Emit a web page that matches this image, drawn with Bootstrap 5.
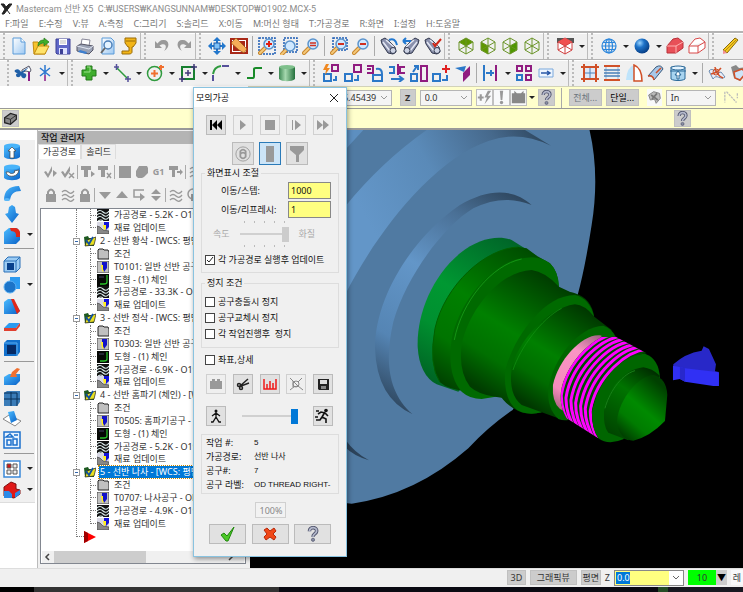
<!DOCTYPE html>
<html lang="ko">
<head>
<meta charset="utf-8">
<meta name="viewport" content="width=device-width, initial-scale=1">
<title>Mastercam 선반 X5</title>
<link href="https://cdn.jsdelivr.net/npm/bootstrap@5.3.0/dist/css/bootstrap.min.css" rel="stylesheet">
<style>
:root{--face:#f0f0f0;--pale:#ffffcc;--line:#b4b4b4}
body{font:9px/12px "Noto Sans","Noto Sans CJK KR",sans-serif;color:#333;background:#fff;overflow:hidden}
button,input,select{font:inherit;color:inherit;padding:0;border-radius:0}
svg{display:block;flex:none}
.caption-bar{height:17px;color:#8c8c8c;font-family:Roboto,"Noto Sans CJK KR",sans-serif}
.menu-bar{height:14px;gap:10px;padding-left:5px}
.menu-bar a{color:#777;text-decoration:none}
.tools{height:27px;background:var(--face);border-top:1px solid var(--line);box-shadow:inset 0 1px #fff;overflow:hidden}
.tools.first{height:28px;border-top-width:2px}
.ic{width:22px;height:22px;border:0;background:none;display:flex;align-items:center;justify-content:center;flex:none}
.ic svg{width:18px;height:18px}
.dd{width:11px;height:17px;border:0;background:none;flex:none;display:flex;align-items:center;justify-content:center}
.dd::before{content:"";border:3px solid transparent;border-top:3px solid #222;border-bottom:0}
.grip{width:11px;height:100%;flex:none;border-left:1px solid #bbb;background:radial-gradient(circle,#bbb 1px,transparent 1px) 2px 3px/4px 4px repeat-y}
.grip.edge{width:8px;border-left:0}
.rule{width:6px;height:20px;flex:none;background:linear-gradient(#aaa,#aaa) 2px 0/1px 100% no-repeat}
.ribbon{height:22px}
.ribbon .pale{background:var(--pale);border-top:1px solid #d2d2b8;padding-left:52px}
.prompt-bar{height:22px;background:var(--pale);border-top:1px solid #999;border-bottom:2px solid #999;padding:0 52px 0 2px}
.pick{height:16px;border:1px solid #b5b5b5;appearance:none;background:#f4f4f4 url("data:image/svg+xml,%3Csvg xmlns='http://www.w3.org/2000/svg' width='8' height='6'%3E%3Cpath d='M1 1l3 3 3-3' fill='none' stroke='%23999'/%3E%3C/svg%3E") right 3px center no-repeat;padding:0 4px;line-height:13px;flex:none}
.pick.coord{padding-left:32px;width:92px}
.pick.depth{width:70px;padding-left:2px;border-color:#888;color:#fff;background:url("data:image/svg+xml,%3Csvg xmlns='http://www.w3.org/2000/svg' width='8' height='6'%3E%3Cpath d='M1 1l3 3 3-3' fill='none' stroke='%23666'/%3E%3C/svg%3E") right 3px center no-repeat,linear-gradient(#0078d7,#0078d7) 1px 1px/14px 12px no-repeat,linear-gradient(#ffff80,#ffff80) 0 0/54px 100% no-repeat #fff}
.flat{height:17px;background:#ccc;border:1px solid #c0c0c0;line-height:14px;flex:none;display:flex;align-items:center;justify-content:center}
.flat svg{width:15px;height:15px}
.side{width:38px;border-right:1px solid #bbb;padding-top:10px}
.side-in{background:var(--face);width:35px;padding-bottom:2px;border-bottom:1px solid #ddd}
.side .ic{height:21px;width:24px}
.side .dd{height:21px}
.side hr{margin:3px 1px 4px 4px;border-top:1px solid #999;opacity:1}
.manager{width:212px;background:var(--face);padding:1px 4px 4px 0}
.manager h2{font-size:9px;line-height:13px;margin:0 -4px 0 0;background:#b4b4b4;color:#111;padding-left:3px}
.tabs{margin-bottom:1px}
.tabs button{border:1px solid #ddd;border-bottom:0;height:15px;line-height:12px;padding:0 4px;background:var(--face)}
.tabs button.on{background:#fff}
.ops{height:23px;padding-left:4px;color:#999}
.ops.last{margin-bottom:2px}
.ops .ic{width:17px}
.ops .ic svg{width:14px;height:14px}
.ops .rule{width:3px;height:14px;background-position:1px 0}
.tree-box{background:#fff;border:1px solid #828790;margin-left:2px}
.tree{list-style:none;margin:0;padding:0;flex:1 0 auto;position:relative}
.tree li{flex:1;display:flex;align-items:center;white-space:nowrap;padding-left:56px;position:relative;line-height:12px;gap:4px}
.tree li svg{width:12px;height:12px}
.tree li::before{content:"";position:absolute;left:49px;width:7px;top:0;bottom:0;border-left:1px dotted #777;background:repeating-linear-gradient(90deg,#777 0 1px,transparent 1px 2px) 0 50%/100% 1px no-repeat}
.tree li.end::before{bottom:50%;background-position:0 100%}
.tree li.op{padding-left:43px;gap:3px}
.tree li.op::before{content:none}
.tree li.op button{position:absolute;left:32px;width:7px;height:7px;border:1px solid #999;background:linear-gradient(#36a,#36a) center/3px 1px no-repeat #fff;z-index:1}
.tree li span{padding:0 1px}
.tree li.sel span{background:#0078d7;color:#fff;flex:1;outline:1px dotted #c80}
.trunk{position:absolute;left:35px;top:0;bottom:6px;border-left:1px dotted #777;width:8px;border-bottom:1px dotted #777}
.hbar{height:12px;background:var(--face);margin:0 1px}
.hbar .thumb{width:92px;background:#cdcdcd;height:100%}
.scene{background:#000;min-width:0}
.status{height:19px;background:var(--face);gap:4px;padding-bottom:1px;border-top:1px solid #ddd}
.status .flat{height:15px;line-height:13px}
.strip{height:5px;background:linear-gradient(90deg,#000 34px,#333 34px 279px,#0a0a12 279px 658px,#264d26 658px 668px,#181820 668px)}
.sim{position:absolute;left:193px;top:87px;width:154px;background:var(--face);border:1px solid #89c3e0;box-shadow:1px 2px 5px #0006;color:#111;z-index:5}
.sim-head{height:19px;background:#fff;padding:0 8px 0 2px}
.sim-body{padding:8px 7px 12px}
.key{width:20px;height:20px;background:#e1e1e1;border:1px solid #bbb;display:flex;align-items:center;justify-content:center;color:#999}
.key svg{width:16px;height:16px}
.key.off{background:#efefef;border-color:#d0d0d0}
.key.big{width:22px;height:23px}
.key.on{background:#cce4f7;border-color:#2a7ab8}
.key.wide{width:37px}
.five{padding:0 6px 0 5px}
.trio{gap:5px;margin:7px 0 2px}
.sim fieldset{border:1px solid #ddd;padding:0 7px 0 3px}
.sim legend{float:none;width:auto;font-size:9px;line-height:12px;margin:0 0 3px;padding:0 2px}
.fld{height:17px;width:43px;background:#ffff80;border:1px solid #888;padding-left:2px}
.pair{margin:0 0 2px 16px}
.pace{color:#aaa;padding:0 16px 0 8px;margin:3px 0 7px}
.tick{display:flex;align-items:center;gap:3px;white-space:nowrap;line-height:12px}
.update{padding-bottom:6px}
.stops{display:grid;gap:4px;padding:4px 0 7px}
.tick input{appearance:none;width:10px;height:10px;border:1px solid #444;background:#fff;flex:none;margin:0}
.tick input:checked{background:#fff url("data:image/svg+xml,%3Csvg xmlns='http://www.w3.org/2000/svg' width='8' height='8'%3E%3Cpath d='M1 4l2 2 4-5' fill='none' stroke='%23222'/%3E%3C/svg%3E")}
.detail{margin:6px 0 8px;padding-left:4px}
.rng{appearance:none;height:16px;background:linear-gradient(#d0d0d0,#d0d0d0) 0 50%/100% 2px no-repeat;margin:0;min-width:0}
.rng::-webkit-slider-thumb{appearance:none;width:7px;height:15px;background:#0078d7}
.rng:disabled::-webkit-slider-thumb{background:#ccc}
.scale{width:49px;padding:5px 0;background:repeating-linear-gradient(90deg,#bbb 0 1px,transparent 1px 10px) 4px 0/41px 2px no-repeat,repeating-linear-gradient(90deg,#bbb 0 1px,transparent 1px 10px) 4px 100%/41px 2px no-repeat}
.facts{border:1px solid #ddd;padding:1px 0 1px 4px;margin:8px 0;line-height:14px;display:grid;grid-template-columns:48px 1fr;white-space:nowrap;overflow:hidden}
.facts dt,.facts dd{font-weight:400;margin:0}
.facts dd{font-family:"Liberation Sans","Noto Sans CJK KR",sans-serif;font-size:8px}
.pct{width:31px;height:16px;border:1px solid #d0d0d0;background:#f2f2f2;text-align:right;color:#888;padding-right:2px}
.finish{margin-top:6px;padding:0 8px}
</style>
<script src="https://cdn.jsdelivr.net/npm/bootstrap@5.3.0/dist/js/bootstrap.bundle.min.js"></script>
</head>
<body class="vh-100 d-flex flex-column position-relative">

<svg width="0" height="0" class="position-absolute" aria-hidden="true">
<defs>
<linearGradient id="gb" x1="0" y1="0" x2="1" y2="1"><stop stop-color="#4cbcff"/><stop offset="1" stop-color="#0a62c8"/></linearGradient>
<linearGradient id="gw" x1="0" y1="0" x2="1" y2="1"><stop stop-color="#fff"/><stop offset="1" stop-color="#9cc8f2"/></linearGradient>
<linearGradient id="gg" x1="0" x2="1"><stop stop-color="#3f8a55"/><stop offset=".4" stop-color="#a5d8ae"/><stop offset="1" stop-color="#24703c"/></linearGradient>
<radialGradient id="gs" cx=".35" cy=".3" r=".75"><stop stop-color="#9ad4ff"/><stop offset=".4" stop-color="#1d72c8"/><stop offset="1" stop-color="#053a80"/></radialGradient>
<g id="lens"><path d="M2 16l5-5" stroke="#c8862c" stroke-width="4" stroke-linecap="round"/><path d="M2 16l5-5" stroke="#f4c878" stroke-width="2" stroke-linecap="round"/><circle cx="11" cy="7" r="5" fill="#cfe8ff" stroke="#5a93cc" stroke-width="1.500"/></g>
<g id="wire" fill="none" stroke="#6a9428"><path d="M9 1l7 4v8l-7 4-7-4V5zM2 5l7 4 7-4M9 9v8M9 1v8M2 13l7-4 7 4"/></g>
<g id="binoc"><path d="M1 3l4-2 5 4 5 5 1 5-3 2-5-1-6-9z" fill="#8a90ac" stroke="#30364c"/><path d="M3 5l7 9M6 3l8 7" stroke="#e4e8f4" stroke-width="1.500"/><circle cx="13" cy="13.500" r="3" fill="#cdd3e4" stroke="#333a50"/></g>
<g id="qm"><path d="M5 6c0-6 9-5 8 0-.5 3-4 3-4 6" fill="none" stroke="#50546c" stroke-width="4"/><path d="M5 6c0-6 9-5 8 0-.5 3-4 3-4 6" fill="none" stroke="#b4b9cc" stroke-width="2"/><circle cx="9" cy="15.500" r="1.800" fill="#888da4" stroke="#50546c" stroke-width=".8"/></g>
</defs>
<symbol id="new" viewBox="0 0 18 18"><path d="M3 1h8l4 4v12H3z" fill="url(#gw)" stroke="#5b9bd8"/><path d="M11 1v4h4" fill="#fff" stroke="#5b9bd8"/></symbol>
<symbol id="open" viewBox="0 0 18 18"><path d="M1 5h5l2 2h7l-2 10H2z" fill="#f7c32c" stroke="#c08a10"/><path d="M2 17l4-8h11l-4 8z" fill="#ffe36a" stroke="#c08a10"/><path d="M6 9c0-5 3-6 6-6V1l5 4-5 4V6c-3 0-4 1-6 3z" fill="#3fae2a" stroke="#24791a" stroke-width=".7"/></symbol>
<symbol id="save" viewBox="0 0 18 18"><path d="M2 2h14v15H3l-1-1z" fill="#6068c8" stroke="#3c4096"/><path d="M5 2h8v6H5z" fill="#fff"/><path d="M5 11h8v6H5z" fill="#dfe3ff"/><path d="M6 12h3v5H6z" fill="#3c4096"/><path d="M6 4h6M6 6h6" stroke="#bbb"/></symbol>
<symbol id="print" viewBox="0 0 18 18"><path d="M5 8l1-6 8 1-1 6z" fill="#fff" stroke="#889"/><path d="M1 9l4-2 12 2v4l-4 4-12-3z" fill="#9aa2b4" stroke="#556"/><path d="M1 9l12 3 4-3" fill="none" stroke="#e4e8f4"/><path d="M4 13l7 2-1 2-8-2z" fill="#3c7fd0"/></symbol>
<symbol id="preview" viewBox="0 0 18 18"><path d="M4 1h9l3 3v13H4z" fill="url(#gw)" stroke="#5b9bd8"/><circle cx="10" cy="8" r="4" fill="#e4f3ff" stroke="#4c7fb8" stroke-width="1.500"/><path d="M7 11l-4 5" stroke="#666" stroke-width="2"/></symbol>
<symbol id="funnel" viewBox="0 0 18 18"><path d="M5 1h11v5l-3 4h-1v5c0 1-1 2-3 2H2v-3h7v-4H8L5 6z" fill="#f2b518" stroke="#9a6c08"/><path d="M6 4h9" stroke="#9a6c08"/></symbol>
<symbol id="undo" viewBox="0 0 18 18"><path d="M2 4v7h7L6.500 8.500C12 5 15 9 11 14c7-4 5-12-1-11-3 0-4 2-5.500 3.500z" fill="#999"/></symbol>
<symbol id="redo" viewBox="0 0 18 18"><path d="M16 4v7H9l2.500-2.500C6 5 3 9 7 14 0 10 2 2 8 3c3 0 4 2 5.500 3.500z" fill="#999"/></symbol>
<symbol id="pan" viewBox="0 0 18 18"><path d="M9 0l4 4h-3v2H8V4H5zM9 18l4-4h-3v-2H8v2H5zM0 9l4-4v3h2v2H4v3zM18 9l-4-4v3h-2v2h2v3z" fill="#2277cc"/><rect x="6" y="6" width="6" height="6" fill="#7cc0f8" stroke="#1c5ca8"/></symbol>
<symbol id="hand" viewBox="0 0 18 18"><path d="M0 1h18v16H0z" fill="#a82818"/><path d="M2 3h14v12H2z" fill="#fff"/><path d="M3 4h12v10H3z" fill="#a82818"/><path d="M1 6l5-5 5 5 6 6-3 4-5-3z" fill="#f4ad58" stroke="#9a4c10" stroke-width=".7"/></symbol>
<symbol id="zin" viewBox="0 0 18 18"><path d="M1 1h16v16H1z" fill="none" stroke="#1d5cb4" stroke-width="1.500" stroke-dasharray="2 1"/><use href="#lens"/><path d="M8 7h6M11 4v6" stroke="#e02010" stroke-width="2"/></symbol>
<symbol id="zwin" viewBox="0 0 18 18"><path d="M4 1h13v14H4z" fill="none" stroke="#1d5cb4" stroke-width="1.500" stroke-dasharray="2 1"/><use href="#lens" y="2" x="-1"/></symbol>
<symbol id="zeq" viewBox="0 0 18 18"><use href="#lens"/><path d="M8 6h6M8 8.500h6" stroke="#d03020" stroke-width="1.500"/></symbol>
<symbol id="zout" viewBox="0 0 18 18"><path d="M3 1h14v12H3z" fill="none" stroke="#1d5cb4" stroke-width="1.500" stroke-dasharray="2 1"/><use href="#lens"/><path d="M8 7h6" stroke="#d03020" stroke-width="2"/></symbol>
<symbol id="zo2" viewBox="0 0 18 18"><use href="#lens"/><path d="M8 7h6" stroke="#d03020" stroke-width="2"/></symbol>
<symbol id="bn1" viewBox="0 0 18 18"><use href="#binoc"/><path d="M9 3c4-2 7 0 8 5" fill="none" stroke="#2278d0" stroke-width="2"/></symbol>
<symbol id="bn2" viewBox="0 0 18 18"><use href="#binoc" transform="matrix(-1 0 0 1 18 0)"/><path d="M1 4h8M1 4l3-3M1 4l3 3" fill="none" stroke="#2278d0" stroke-width="2"/></symbol>
<symbol id="bn3" viewBox="0 0 18 18"><use href="#binoc"/><path d="M9 6l2 3 6-7" fill="none" stroke="#d02818" stroke-width="2"/></symbol>
<symbol id="ctop" viewBox="0 0 18 18"><path d="M9 1l7 4-7 4-7-4z" fill="#5f9800"/><use href="#wire"/></symbol>
<symbol id="cleft" viewBox="0 0 18 18"><path d="M2 5l7 4v8l-7-4z" fill="#5f9800"/><use href="#wire"/></symbol>
<symbol id="cright" viewBox="0 0 18 18"><path d="M16 5L9 9v8l7-4z" fill="#4f9800"/><use href="#wire"/></symbol>
<symbol id="cwire" viewBox="0 0 18 18"><use href="#wire"/></symbol>
<symbol id="cred" viewBox="0 0 18 18"><path d="M1 1h17v5H1z" fill="#555"/><path d="M9 1l7 4v8l-7 4-7-4V5z" fill="#fff" stroke="#d04040"/><path d="M9 1l7 4-7 4-7-4z" fill="#f05050"/><path d="M2 5l7 4 7-4M9 9v8M2 13l7-4 7 4" fill="none" stroke="#d04040"/></symbol>
<symbol id="globe" viewBox="0 0 18 18"><g fill="none" stroke="#2b86dc" stroke-width="1.200"><circle cx="9" cy="9" r="7"/><ellipse cx="9" cy="9" rx="3.500" ry="7"/><path d="M2 9h14M9 2v14M3 5.500h12M3 12.500h12"/></g></symbol>
<symbol id="ball" viewBox="0 0 18 18"><circle cx="9" cy="9" r="7.500" fill="url(#gs)"/></symbol>
<symbol id="red" viewBox="0 0 18 18"><path d="M1 9l6-7 5-1 5 4v6l-7 5H1z" fill="#e85058" stroke="#b83038"/><path d="M1 9h9l7-4M10 9v7" fill="none" stroke="#ffb0b0"/></symbol>
<symbol id="redw" viewBox="0 0 18 18"><path d="M1 9l6-7 5-1 5 4v6l-7 5H1zM1 9h9l7-4M10 9v7" fill="#fff" stroke="#d84848"/></symbol>
<symbol id="pencil" viewBox="0 0 18 18"><path d="M2 13L14 1l3 2L6 16z" fill="#f4c820" stroke="#8a6a08"/><path d="M2 13l4 3-4 1z" fill="#f49098"/><path d="M4 14L15 3" stroke="#b88c10"/></symbol>
<symbol id="bfly" viewBox="0 0 18 18"><path d="M8 6l7-4 2 4-1 2-4-1-4 1z" fill="#fff" stroke="#556"/><path d="M1 6c3-2 5 0 6 2l8-5-6 6c4 0 4 3 2 5-2 1-4-1-4-3-1 3-5 3-5 0 0-1 1-2 2-2-3 0-4-2-3-3z" fill="#2060a8"/><path d="M15 8v9" stroke="#8a1c8a" stroke-width="2"/></symbol>
<symbol id="star" viewBox="0 0 18 18"><path d="M9 1v10M4 4l10 8M14 4L4 12" stroke="#2b78d0" stroke-width="1.500"/><path d="M9 11v6" stroke="#8a1c8a" stroke-width="1.500"/></symbol>
<symbol id="plus" viewBox="0 0 18 18"><path d="M6 2h6v4h4v6h-4v4H6v-4H2V6h4z" fill="#3fae2e" stroke="#24791a"/><path d="M7 3h3v5H4" fill="none" stroke="#9be08a"/></symbol>
<symbol id="line" viewBox="0 0 18 18"><path d="M3 3l12 12" stroke="#2f9a3e" stroke-width="1.500"/><path d="M1 3h5M3.500 0v6M12 15h6M15 12v6" stroke="#55509a" stroke-width="1.500"/></symbol>
<symbol id="circ" viewBox="0 0 18 18"><circle cx="8.500" cy="9.500" r="7" fill="none" stroke="#2f9a3e" stroke-width="1.500"/><path d="M5 9.500h7M8.500 6v7M13 3h5M15 1v5" stroke="#f07030" stroke-width="2"/></symbol>
<symbol id="rect" viewBox="0 0 18 18"><path d="M3 3h12v12H3z" fill="none" stroke="#188030" stroke-width="2"/><path d="M6 9h6M9 6v6M12 3h6M15 0v6M0 15h6M3 12v6" stroke="#403878" stroke-width="1.500"/></symbol>
<symbol id="arc" viewBox="0 0 18 18"><path d="M1 10Q2 3 9 2" fill="none" stroke="#2f9a3e" stroke-width="2"/><path d="M10 2h7M1 11v6" stroke="#55509a" stroke-width="2"/></symbol>
<symbol id="step" viewBox="0 0 18 18"><path d="M2 14h6q1 0 1-2V5q0-1 2-1h6" fill="none" stroke="#188a28" stroke-width="2"/></symbol>
<symbol id="cyl" viewBox="0 0 18 18"><path d="M1 3v12c3 3 13 3 16 0V3z" fill="url(#gg)"/><ellipse cx="9" cy="3" rx="8" ry="2" fill="#7fc08c"/></symbol>
<symbol id="x1" viewBox="0 0 18 18"><path d="M10 1h6v6h-6z" fill="none" stroke="#901c80" stroke-width="2"/><path d="M2 10h7v7H2zM11 16h3v-4" fill="none" stroke="#2b78c8" stroke-width="2"/><path d="M4 0L1 6h3l-1 5 5-7H5l2-4z" fill="#f08820"/></symbol>
<symbol id="x2" viewBox="0 0 18 18"><path d="M10 1h7v7h-7z" fill="none" stroke="#901c80" stroke-width="2"/><path d="M1 10h7v7H1zM10 16h4v-5" fill="none" stroke="#2b78c8" stroke-width="2"/></symbol>
<symbol id="x3" viewBox="0 0 18 18"><path d="M1 2h6v7H1M1 5h4" fill="none" stroke="#901c80" stroke-width="2"/><path d="M7 11h9v6H7zM10 5c4-1 6 1 6 5" fill="none" stroke="#2b78c8" stroke-width="2"/></symbol>
<symbol id="x4" viewBox="0 0 18 18"><path d="M10 0v11M17 3h-5v6h5" fill="none" stroke="#901c80" stroke-width="2"/><path d="M1 3h5v6H1M3 15h11M11 12l4 3-4 3" fill="none" stroke="#2b78c8" stroke-width="2"/></symbol>
<symbol id="x5" viewBox="0 0 18 18"><path d="M11 2h6v15h-6z" fill="none" stroke="#901c80" stroke-width="2"/><path d="M1 10h6v7H1zM3 8l4-6M4 2h4v4" fill="none" stroke="#2b78c8" stroke-width="2"/></symbol>
<symbol id="x6" viewBox="0 0 18 18"><path d="M1 10h7v7H1zM10 16h5v-5" fill="none" stroke="#2b78c8" stroke-width="2"/><path d="M14 1v8M10 5h8" stroke="#e02020" stroke-width="2"/></symbol>
<symbol id="x7" viewBox="0 0 18 18"><path d="M1 4l11-2-2 6z" fill="#2b78c8"/><path d="M9 9l7-7v9l-7 7z" fill="#901c80"/></symbol>
<symbol id="x8" viewBox="0 0 18 18"><path d="M2 1v16M4 9h8M9 6v6" fill="none" stroke="#2b78c8" stroke-width="2"/><path d="M14 1v16" stroke="#901c80" stroke-width="2"/></symbol>
<symbol id="x9" viewBox="0 0 18 18"><path d="M2 2h5v5H2zM11 2h5v5h-5zM11 11h5v5h-5z" fill="none" stroke="#901c80" stroke-width="2"/><path d="M2 11h5v5H2z" fill="none" stroke="#2b78c8" stroke-width="2"/></symbol>
<symbol id="x10" viewBox="0 0 18 18"><path d="M2 5h14v8H2z" fill="#eef6ff" stroke="#7aa8dc"/><path d="M4 9h9M10 7l3 2-3 2" fill="none" stroke="#2858a8" stroke-width="1.500"/></symbol>
<symbol id="s1" viewBox="0 0 18 18"><path d="M3 3h12v12H3z" fill="#dfe9f8"/><path d="M9 2v14M2 9h14" stroke="#4a80b8"/><path d="M3 0v18M15 0v18M0 3h18M0 15h18" stroke="#d05028" stroke-width="2"/></symbol>
<symbol id="s2" viewBox="0 0 18 18"><path d="M3 2v14M15 2v14" stroke="#9ab8d8"/><path d="M1 2h16M1 16h16" stroke="#d05028" stroke-width="2"/><path d="M1 6h16M1 9h16M1 12h16" stroke="#4a80b8" stroke-width="1.500"/></symbol>
<symbol id="s3" viewBox="0 0 18 18"><path d="M9 1Q2 3 1 16h8z" fill="#bfe4fb"/><path d="M9 1v16h8Q17 4 9 1z" fill="#fff" stroke="#d05028" stroke-width="1.500"/></symbol>
<symbol id="s4" viewBox="0 0 18 18"><path d="M1 12L9 3q5-3 7 2l-9 11q-1-5-6-4z" fill="#a8c8e8" stroke="#38587c"/><path d="M1 12q5-1 6 4M9 9l5-5" fill="none" stroke="#d05028" stroke-width="1.500"/></symbol>
<symbol id="s5" viewBox="0 0 18 18"><path d="M2 3v12c3 2 11 2 14 0V3z" fill="#a8d4f0" stroke="#2a6898"/><ellipse cx="9" cy="4" rx="7" ry="2" fill="#e4f4ff" stroke="#2a6898"/><path d="M1 7h16" stroke="#2a6898"/><path d="M9 7l3 4h-2v4H8v-4H6z" fill="#fff" stroke="#2a6898"/></symbol>
<symbol id="s6" viewBox="0 0 18 18"><path d="M1 7c4-5 7 4 12 1l4 5c-5 4-8-4-12 2z" fill="#e8eef8" stroke="#6a8ab0"/><path d="M3 10q6-1 10-6M7 3q1 8 8 11" fill="none" stroke="#d05028" stroke-width="1.500"/><circle cx="8" cy="8" r="3" fill="none" stroke="#d05028"/></symbol>
<symbol id="s7" viewBox="0 0 18 18"><path d="M1 3l5-2 3 3 8-1v6l-7 8-6-3z" fill="#888"/><path d="M4 8l8-3 4 4-6 7-5-2z" fill="#cfe4f8" stroke="#d05028" stroke-width="1.500"/></symbol>
<symbol id="qmark" viewBox="0 0 18 18"><use href="#qm"/></symbol>
<symbol id="block" viewBox="0 0 18 18"><path d="M2 8l7-5 7 2v5l-7 6-7-2z" fill="#888" stroke="#222" stroke-width="1.500"/><path d="M2 8l7 2 7-5M9 10v6" fill="none" stroke="#222"/></symbol>
<symbol id="g1" viewBox="0 0 18 18"><path d="M1 9h7M4.500 5v8" stroke="#999" stroke-width="2.500"/><path d="M13 1l-4 8h3l-3 8 8-10h-4l4-6z" fill="#999"/></symbol>
<symbol id="g2" viewBox="0 0 18 18"><path d="M7 1h4l-1 11H8z" fill="#999"/><circle cx="9" cy="15" r="2" fill="#999"/></symbol>
<symbol id="g3" viewBox="0 0 18 18"><path d="M1 4h3V1l3 3h5l3-3v3h2v12H1z" fill="#888"/></symbol>
<symbol id="g4" viewBox="0 0 18 18"><path d="M2 6l6-4 7 2 1 6-5 6-2-5-5 1z" fill="#bbb" stroke="#777"/><path d="M5 6l8 6M12 4L6 11" stroke="#777" stroke-width="2"/></symbol>
<symbol id="g5" viewBox="0 0 18 18"><path d="M1 2v13M3 2l12 13M16 4v6" stroke="#bbb" stroke-dasharray="3 1" stroke-width="1.500"/></symbol>
<symbol id="m1" viewBox="0 0 18 18"><path d="M1 4v11c3 3 13 3 16 0V4z" fill="url(#gb)"/><ellipse cx="9" cy="4" rx="8" ry="2.500" fill="#49b4fa"/><path d="M9 5l4 4h-2v7H7V9H5z" fill="#fff" stroke="#444" stroke-width=".7"/></symbol>
<symbol id="m2" viewBox="0 0 18 18"><path d="M1 4v11c3 3 13 3 16 0V4z" fill="url(#gb)"/><ellipse cx="9" cy="4" rx="8" ry="2.500" fill="#49b4fa"/><path d="M3 9c1 6 10 5 12 1l1-3-5 1 1 1c-2 2-5 2-6 0z" fill="#fff" stroke="#444" stroke-width=".7"/></symbol>
<symbol id="m3" viewBox="0 0 18 18"><path d="M1 16C1 7 6 2 16 2l2 5c-7 0-10 3-11 9z" fill="url(#gb)"/><ellipse cx="4" cy="15.500" rx="3" ry="1.500" fill="#5ab8f8"/></symbol>
<symbol id="m4" viewBox="0 0 18 18"><path d="M6 2l3-2 3 2 1 6 3 1-7 9-7-9 3-1z" fill="url(#gb)"/></symbol>
<symbol id="m5" viewBox="0 0 18 18"><path d="M1 6l5-4h8l3 4v8l-4 4H1z" fill="url(#gb)"/><path d="M7 2h6q5 1 4 9h-4q1-6-5-6z" fill="#e02818"/></symbol>
<symbol id="m6" viewBox="0 0 18 18"><path d="M1 6l4-4h12v11l-4 4H1z" fill="#9cccf4" stroke="#2a70b8"/><path d="M4 8h7v7H4z" fill="#08408c"/><path d="M1 6h12v11M13 6l4-4" fill="none" stroke="#2a70b8"/></symbol>
<symbol id="m7" viewBox="0 0 18 18"><path d="M7 1h10v12H7z" fill="#2b9af0"/><circle cx="7" cy="11" r="6" fill="#1c74c8" stroke="#5ab0f4"/></symbol>
<symbol id="m8" viewBox="0 0 18 18"><path d="M1 5l4-3h5l7 12-3 3H1z" fill="url(#gb)"/><path d="M8 2h3l6 12-3 3z" fill="#e02818"/></symbol>
<symbol id="m9" viewBox="0 0 18 18"><path d="M1 10l5-5h11l-4 5z" fill="#2b9af0"/><path d="M1 10h12v3H1zM13 10l4-5v3l-4 5z" fill="#e04030"/></symbol>
<symbol id="m10" viewBox="0 0 18 18"><path d="M1 4l3-3h13v12l-3 4H1z" fill="#1270cc"/><path d="M4 6h9v9H4z" fill="#052a66"/><path d="M1 4h13v13" fill="none" stroke="#58acf0"/></symbol>
<symbol id="m11" viewBox="0 0 18 18"><path d="M1 9l5-3h11v7l-4 4H1z" fill="url(#gb)"/><path d="M7 9l2-5 5-4 3 1-4 5 1 3z" fill="#f07030"/></symbol>
<symbol id="m12" viewBox="0 0 18 18"><path d="M1 4l3-2h13v11l-3 4H1z" fill="#3a7cb8"/><path d="M1 10h16M8 3v14M1 4h13v13" stroke="#083058" fill="none"/></symbol>
<symbol id="m13" viewBox="0 0 18 18"><path d="M0 9l6-4 12 6-6 5z" fill="#fff" stroke="#888"/><path d="M5 2l6-1 3 9-6 3z" fill="url(#gb)"/></symbol>
<symbol id="m14" viewBox="0 0 18 18"><path d="M1 1h16v16H1z" fill="#e8f3ff" stroke="#1c70cc" stroke-width="1.500"/><path d="M4 9h4v5H4zM10 8h4v6h-4zM3 6l4-3 3 3zM11 4h4" fill="none" stroke="#1c70cc" stroke-width="1.500"/></symbol>
<symbol id="m15" viewBox="0 0 18 18"><path d="M1 1h16v16H1z" fill="#fff" stroke="#3a88d8" stroke-width="1.500"/><path d="M4 4h4v4H4z" fill="#d01818" stroke="#555"/><path d="M10 4h4v4h-4zM4 10h4v4H4zM10 10h4v4h-4z" fill="#eee" stroke="#555"/></symbol>
<symbol id="m16" viewBox="0 0 18 18"><path d="M1 6l7-5 5 2v5l4 1v4l-6 4-10-2z" fill="#e01818" stroke="#801010"/><path d="M1 10h5l3 3v4H1zM12 12l5-3v4l-5 4z" fill="#2b8ae8"/></symbol>
<symbol id="p1" viewBox="0 0 14 14"><path d="M0 7l2-1 2 3 4-8v5L4 13z" fill="#999"/><path d="M9 5l4 3-4 4z" fill="#999"/></symbol>
<symbol id="p2" viewBox="0 0 14 14"><path d="M0 7l2-1 2 3 5-8v5L4 13z" fill="#999"/><path d="M8 8l5 5M13 8l-5 5" stroke="#999" stroke-width="1.500"/></symbol>
<symbol id="p3" viewBox="0 0 14 14"><path d="M0 1h10v4H7v7H3V5H0zM10 6l4 3-4 3z" fill="#999"/></symbol>
<symbol id="p4" viewBox="0 0 14 14"><path d="M0 1h10v4H7v7H3V5H0z" fill="#999"/><path d="M9 8l4 5M13 8l-4 5" stroke="#999" stroke-width="1.500"/></symbol>
<symbol id="p5" viewBox="0 0 14 14"><path d="M1 1h12v12H1z" fill="#999"/></symbol>
<symbol id="p6" viewBox="0 0 14 14"><path d="M4 1h8l1 2v5l-4 4-2 1H3L1 11V6z" fill="#999"/></symbol>
<symbol id="p8" viewBox="0 0 14 14"><path d="M0 1h9v4H6v7H3V5H0zM8 6h3V4l3 3-3 3V8H8z" fill="#999"/></symbol>
<symbol id="p9" viewBox="0 0 14 14"><path d="M2 6h10v8H2z" fill="#999"/><path d="M4 7V4q3-5 6 0v3" fill="none" stroke="#999" stroke-width="2"/></symbol>
<symbol id="p10" viewBox="0 0 14 14"><path d="M1 4q3-3 6 0t6-1M1 8q3-3 6 0t6-1M1 12q3-3 6 0t6-1" fill="none" stroke="#999" stroke-width="1.300"/></symbol>
<symbol id="p11" viewBox="0 0 14 14"><path d="M1 4h12L7 11z" fill="#999"/></symbol>
<symbol id="p12" viewBox="0 0 14 14"><path d="M1 10h12L7 3z" fill="#999"/></symbol>
<symbol id="p13" viewBox="0 0 14 14"><path d="M12 2H2v7h7" fill="none" stroke="#999" stroke-width="1.500"/><path d="M8 5l5 4-5 4z" fill="#999"/></symbol>
<symbol id="p14" viewBox="0 0 14 14"><path d="M2 6h10L7 1zM2 8h10l-5 5z" fill="#999"/></symbol>
<symbol id="p15" viewBox="0 0 14 14"><circle cx="7" cy="6" r="5" fill="none" stroke="#999" stroke-width="1.500"/><path d="M5 6h4v7H5z" fill="#999"/></symbol>
<symbol id="t-path" viewBox="0 0 12 12"><path d="M0 0h12v12H0z" fill="#111"/><path d="M0 3q3-3 6 0t6-1M0 6q3-3 6 0t6-1M0 9q3-3 6 0t6-1M1 12q3-2 5 0" fill="none" stroke="#dcecec" stroke-width="1.100"/></symbol>
<symbol id="t-stock" viewBox="0 0 12 12"><path d="M0 0h12v12H0z" fill="#d8d8e4"/><path d="M0 4l3 1 3 3 6 1v3H0z" fill="#888" stroke="#444" stroke-width=".7"/><path d="M7 0h5v5L9 8 7 5z" fill="#1212d8"/><path d="M6 3h3v4l-2 1z" fill="#ffee20"/></symbol>
<symbol id="t-fold" viewBox="0 0 12 12"><path d="M1 2l1-1h4l1 1h4l1 2v7H1z" fill="#c0c0c0" stroke="#222"/></symbol>
<symbol id="t-tool" viewBox="0 0 12 12"><path d="M0 0h12v12H0z" fill="#c0c0c0" stroke="#444"/><path d="M5 1h5v6L7 11 5 7z" fill="#1212c8"/><path d="M4 4h2v4l1 3-2-1z" fill="#ffee20"/></symbol>
<symbol id="t-geo" viewBox="0 0 12 12"><path d="M0 0h12v12H0z" fill="#050805"/><path d="M10 1v7q0 2-3 2H3" fill="none" stroke="#28c028" stroke-width="1.300"/><path d="M2 3h5" stroke="#446"/></symbol>
<symbol id="t-op" viewBox="0 0 12 12"><path d="M0 2l4-1 1 2h5v8H1z" fill="#1d5a20"/><path d="M1 11l2-6 9-3-2 8z" fill="#e8e020" stroke="#222" stroke-width=".7"/><path d="M2 5l3 4 4-7" fill="none" stroke="#1050a0" stroke-width="1.800"/></symbol>
</svg>

<header>
<div class="caption-bar d-flex align-items-center gap-1">
<svg width="12" height="12" viewBox="0 0 12 12"><path d="M1 1l4 5-3 5h2l8-10H9L6 4 4 1zM7 7l3 4" fill="#222" stroke="#222"/></svg>
<span class="text-nowrap">Mastercam 선반 X5&nbsp; C:₩USERS₩KANGSUNNAM₩DESKTOP₩O1902.MCX-5</span>
</div>
<nav class="menu-bar d-flex align-items-center text-nowrap">
<a href="#">F:파일</a><a href="#">E:수정</a><a href="#">V:뷰</a><a href="#">A:측정</a><a href="#">C:그리기</a><a href="#">S:솔리드</a><a href="#">X:이동</a><a href="#">M:머신 형태</a><a href="#">T:가공경로</a><a href="#">R:화면</a><a href="#">I:설정</a><a href="#">H:도움말</a>
</nav>
</header>

<div class="tools first d-flex align-items-center" role="toolbar" aria-label="파일 및 화면">
<span class="grip edge"></span>
<button class="ic" aria-label="새 파일"><svg><use href="#new"/></svg></button>
<button class="ic" aria-label="열기"><svg><use href="#open"/></svg></button>
<button class="ic" aria-label="저장"><svg><use href="#save"/></svg></button>
<button class="ic" aria-label="인쇄"><svg><use href="#print"/></svg></button>
<button class="ic" aria-label="미리보기"><svg><use href="#preview"/></svg></button>
<button class="ic" aria-label="변환"><svg><use href="#funnel"/></svg></button>
<span class="grip"></span>
<button class="ic" aria-label="실행 취소"><svg><use href="#undo"/></svg></button>
<button class="ic" aria-label="다시 실행"><svg><use href="#redo"/></svg></button>
<span class="grip"></span>
<button class="ic" aria-label="화면 맞춤"><svg><use href="#pan"/></svg></button>
<button class="ic" aria-label="다시 그리기"><svg><use href="#hand"/></svg></button>
<span class="rule"></span>
<button class="ic" aria-label="확대"><svg><use href="#zin"/></svg></button>
<button class="ic" aria-label="영역 확대"><svg><use href="#zwin"/></svg></button>
<button class="ic" aria-label="확대 복원"><svg><use href="#zeq"/></svg></button>
<span class="rule"></span>
<button class="ic" aria-label="영역 축소"><svg><use href="#zout"/></svg></button>
<button class="ic" aria-label="축소"><svg><use href="#zo2"/></svg></button>
<span class="rule"></span>
<button class="ic" aria-label="동적 뷰"><svg><use href="#bn1"/></svg></button>
<button class="ic" aria-label="이전 뷰"><svg><use href="#bn2"/></svg></button>
<button class="ic" aria-label="뷰 확인"><svg><use href="#bn3"/></svg></button>
<span class="grip"></span>
<button class="ic" aria-label="평면 뷰"><svg><use href="#ctop"/></svg></button>
<button class="ic" aria-label="정면 뷰"><svg><use href="#cleft"/></svg></button>
<button class="ic" aria-label="측면 뷰"><svg><use href="#cright"/></svg></button>
<button class="ic" aria-label="입체 뷰"><svg><use href="#cwire"/></svg></button>
<span class="grip"></span>
<button class="ic" aria-label="작업 평면"><svg><use href="#cred"/></svg></button><button class="dd" aria-label="더 보기"></button>
<span class="grip"></span>
<button class="ic" aria-label="와이어"><svg><use href="#globe"/></svg></button><button class="dd" aria-label="더 보기"></button>
<button class="ic" aria-label="음영"><svg><use href="#ball"/></svg></button><button class="dd" aria-label="더 보기"></button>
<button class="ic" aria-label="솔리드 음영"><svg><use href="#red"/></svg></button>
<button class="ic" aria-label="솔리드 외곽"><svg><use href="#redw"/></svg></button>
<span class="grip"></span>
<button class="ic" aria-label="삭제"><svg><use href="#pencil"/></svg></button>
</div>

<div class="tools d-flex align-items-center ps-1" role="toolbar" aria-label="작도">
<span class="grip edge"></span>
<button class="ic" aria-label="분석"><svg><use href="#bfly"/></svg></button>
<button class="ic" aria-label="트림"><svg><use href="#star"/></svg></button><button class="dd" aria-label="더 보기"></button>
<span class="grip"></span>
<button class="ic" aria-label="점"><svg><use href="#plus"/></svg></button><button class="dd" aria-label="더 보기"></button>
<button class="ic" aria-label="직선"><svg><use href="#line"/></svg></button><button class="dd" aria-label="더 보기"></button>
<button class="ic" aria-label="원"><svg><use href="#circ"/></svg></button><button class="dd" aria-label="더 보기"></button>
<button class="ic" aria-label="사각형"><svg><use href="#rect"/></svg></button><button class="dd" aria-label="더 보기"></button>
<button class="ic" aria-label="필렛"><svg><use href="#arc"/></svg></button><button class="dd" aria-label="더 보기"></button>
<button class="ic" aria-label="스플라인"><svg><use href="#step"/></svg></button><button class="dd" aria-label="더 보기"></button>
<button class="ic" aria-label="원통"><svg><use href="#cyl"/></svg></button><button class="dd" aria-label="더 보기"></button>
<span class="grip"></span>
<button class="ic" aria-label="동적 이동"><svg><use href="#x1"/></svg></button>
<button class="ic" aria-label="이동"><svg><use href="#x2"/></svg></button>
<button class="ic" aria-label="회전"><svg><use href="#x3"/></svg></button>
<button class="ic" aria-label="대칭"><svg><use href="#x4"/></svg></button>
<button class="ic" aria-label="배율"><svg><use href="#x5"/></svg></button>
<button class="ic" aria-label="원점 이동"><svg><use href="#x6"/></svg></button>
<button class="ic" aria-label="투영"><svg><use href="#x7"/></svg></button>
<span class="rule"></span>
<button class="ic" aria-label="오프셋"><svg><use href="#x8"/></svg></button><button class="dd" aria-label="더 보기"></button>
<button class="ic" aria-label="배열"><svg><use href="#x9"/></svg></button>
<button class="ic" aria-label="드래그"><svg><use href="#x10"/></svg></button><button class="dd" aria-label="더 보기"></button>
<span class="grip"></span>
<button class="ic" aria-label="망 곡면"><svg><use href="#s1"/></svg></button>
<button class="ic" aria-label="룰드 곡면"><svg><use href="#s2"/></svg></button>
<button class="ic" aria-label="회전 곡면"><svg><use href="#s3"/></svg></button>
<button class="ic" aria-label="스윕 곡면"><svg><use href="#s4"/></svg></button>
<button class="ic" aria-label="돌출 곡면"><svg><use href="#s5"/></svg></button><button class="dd" aria-label="더 보기"></button>
<span class="rule"></span>
<button class="ic" aria-label="곡면 트림"><svg><use href="#s6"/></svg></button>
<button class="ic" aria-label="곡면 필렛"><svg><use href="#s7"/></svg></button>
</div>

<div class="ribbon d-flex">
<div class="bg-white col-4"></div>
<div class="pale flex-grow-1 d-flex align-items-center overflow-hidden">
<select class="pick coord" aria-label="좌표"><option>126.45439</option></select>
<button class="flat fw-bold ms-2" style="width:16px">Z</button>
<select class="pick ms-1" style="width:52px" aria-label="Z 값"><option>0.0</option></select>
<div class="d-flex align-items-center ms-1">
<button class="flat bg-light" aria-label="빠른 점"><svg><use href="#g1"/></svg></button>
<button class="flat bg-light" aria-label="주의"><svg><use href="#g2"/></svg></button>
<button class="flat bg-light" aria-label="자동 커서"><svg><use href="#g3"/></svg></button>
<button class="dd" aria-label="더 보기"></button>
<button class="flat" aria-label="도움말"><svg><use href="#qmark"/></svg></button>
</div>
<span class="rule ms-1"></span>
<button class="flat text-secondary ms-1" style="width:33px">전체...</button>
<button class="flat text-black ms-1" style="width:33px">단일...</button>
<button class="flat bg-light border-0 ms-2" aria-label="선택 방식"><svg><use href="#g4"/></svg></button>
<select class="pick ms-1" style="width:50px" aria-label="선택 범위"><option>In</option></select>
<button class="flat bg-transparent border-0 ms-2" aria-label="확인 선택"><svg><use href="#g5"/></svg></button>
</div>
</div>

<div class="prompt-bar d-flex align-items-center justify-content-between">
<button class="flat" aria-label="솔리드 선택"><svg><use href="#block"/></svg></button>
<button class="flat" aria-label="도움말"><svg><use href="#qmark"/></svg></button>
</div>

<main class="d-flex flex-grow-1 overflow-hidden">
<aside class="side flex-shrink-0">
<div class="side-in">
<button class="ic" aria-label="돌출"><svg><use href="#m1"/></svg></button>
<button class="ic" aria-label="회전체"><svg><use href="#m2"/></svg></button>
<button class="ic" aria-label="스윕"><svg><use href="#m3"/></svg></button>
<button class="ic" aria-label="로프트"><svg><use href="#m4"/></svg></button>
<div class="d-flex"><button class="ic" aria-label="필렛"><svg><use href="#m5"/></svg></button><button class="dd" aria-label="더 보기"></button></div>
<hr>
<button class="ic" aria-label="쉘"><svg><use href="#m6"/></svg></button>
<div class="d-flex"><button class="ic" aria-label="불리언"><svg><use href="#m7"/></svg></button><button class="dd" aria-label="더 보기"></button></div>
<button class="ic" aria-label="구배"><svg><use href="#m8"/></svg></button>
<button class="ic" aria-label="두께"><svg><use href="#m9"/></svg></button>
<button class="ic" aria-label="면 제거"><svg><use href="#m10"/></svg></button>
<hr>
<button class="ic" aria-label="면 이동"><svg><use href="#m11"/></svg></button>
<button class="ic" aria-label="트림"><svg><use href="#m12"/></svg></button>
<button class="ic" aria-label="곡면 추출"><svg><use href="#m13"/></svg></button>
<button class="ic" aria-label="배치"><svg><use href="#m14"/></svg></button>
<hr>
<div class="d-flex"><button class="ic" aria-label="패턴"><svg><use href="#m15"/></svg></button><button class="dd" aria-label="더 보기"></button></div>
<div class="d-flex"><button class="ic" aria-label="형상 인식"><svg><use href="#m16"/></svg></button><button class="dd" aria-label="더 보기"></button></div>
</div>
</aside>

<section class="manager d-flex flex-column flex-shrink-0">
<h2>작업 관리자</h2>
<div class="tabs d-flex"><button class="on">가공경로</button><button>솔리드</button></div>
<div class="ops d-flex align-items-center overflow-hidden">
<button class="ic" aria-label="모두 선택"><svg><use href="#p1"/></svg></button>
<button class="ic" aria-label="선택 해제"><svg><use href="#p2"/></svg></button>
<span class="rule"></span>
<button class="ic" aria-label="재생성"><svg><use href="#p3"/></svg></button>
<button class="ic" aria-label="무효 재생성"><svg><use href="#p4"/></svg></button>
<span class="rule"></span>
<button class="ic" aria-label="백플롯"><svg><use href="#p5"/></svg></button>
<button class="ic" aria-label="검증"><svg><use href="#p6"/></svg></button>
<button class="ic fw-bold" aria-label="포스트">G1</button>
<button class="ic" aria-label="고속 가공"><svg><use href="#p8"/></svg></button>
<span class="rule"></span>
<button class="ic" aria-label="삭제"><svg><use href="#p10"/></svg></button>
</div>
<div class="ops last d-flex align-items-center overflow-hidden">
<button class="ic" aria-label="잠금"><svg><use href="#p9"/></svg></button>
<button class="ic" aria-label="경로 표시"><svg><use href="#p10"/></svg></button>
<button class="ic" aria-label="포스트 잠금"><svg><use href="#p9"/></svg></button>
<span class="rule"></span>
<button class="ic" aria-label="아래로"><svg><use href="#p11"/></svg></button>
<button class="ic" aria-label="위로"><svg><use href="#p12"/></svg></button>
<button class="ic" aria-label="삽입 위치"><svg><use href="#p13"/></svg></button>
<button class="ic" aria-label="스크롤"><svg><use href="#p14"/></svg></button>
<span class="rule"></span>
<button class="ic" aria-label="선택 경로"><svg><use href="#p10"/></svg></button>
<button class="ic" aria-label="공구 표시"><svg><use href="#p15"/></svg></button>
</div>
<div class="tree-box flex-grow-1 d-flex flex-column overflow-hidden justify-content-between">
<div class="d-flex flex-column flex-grow-1 position-relative mb-2">
<ul class="tree d-flex flex-column">
<li><svg><use href="#t-path"/></svg><span>가공경로 - 5.2K - O1902.NC</span></li>
<li class="end"><svg><use href="#t-stock"/></svg><span>재료 업데이트</span></li>
<li class="op"><button aria-label="접기"></button><svg><use href="#t-op"/></svg><span>2 - 선반 황삭 - [WCS: 평면]</span></li>
<li><svg><use href="#t-fold"/></svg><span>조건</span></li>
<li><svg><use href="#t-tool"/></svg><span>T0101: 일반 선반 공구</span></li>
<li><svg><use href="#t-geo"/></svg><span>도형 - (1) 체인</span></li>
<li><svg><use href="#t-path"/></svg><span>가공경로 - 33.3K - O1902.NC</span></li>
<li class="end"><svg><use href="#t-stock"/></svg><span>재료 업데이트</span></li>
<li class="op"><button aria-label="접기"></button><svg><use href="#t-op"/></svg><span>3 - 선반 정삭 - [WCS: 평면]</span></li>
<li><svg><use href="#t-fold"/></svg><span>조건</span></li>
<li><svg><use href="#t-tool"/></svg><span>T0303: 일반 선반 공구</span></li>
<li><svg><use href="#t-geo"/></svg><span>도형 - (1) 체인</span></li>
<li><svg><use href="#t-path"/></svg><span>가공경로 - 6.9K - O1902.NC</span></li>
<li class="end"><svg><use href="#t-stock"/></svg><span>재료 업데이트</span></li>
<li class="op"><button aria-label="접기"></button><svg><use href="#t-op"/></svg><span>4 - 선반 홈파기 (체인) - [WCS]</span></li>
<li><svg><use href="#t-fold"/></svg><span>조건</span></li>
<li><svg><use href="#t-tool"/></svg><span>T0505: 홈파기공구 - OD</span></li>
<li><svg><use href="#t-geo"/></svg><span>도형 - (1) 체인</span></li>
<li><svg><use href="#t-path"/></svg><span>가공경로 - 5.2K - O1902.NC</span></li>
<li class="end"><svg><use href="#t-stock"/></svg><span>재료 업데이트</span></li>
<li class="op sel"><button aria-label="접기"></button><svg><use href="#t-op"/></svg><span>5 - 선반 나사 - [WCS: 평면]</span></li>
<li><svg><use href="#t-fold"/></svg><span>조건</span></li>
<li><svg><use href="#t-tool"/></svg><span>T0707: 나사공구 - OD</span></li>
<li><svg><use href="#t-path"/></svg><span>가공경로 - 4.9K - O1902.NC</span></li>
<li class="end"><svg><use href="#t-stock"/></svg><span>재료 업데이트</span></li>
<li class="op"><svg viewBox="0 0 12 12"><path d="M0 0l12 6-12 6z" fill="#f00"/><path d="M0 0l4 2v8l-4 2z" fill="#a00000"/></svg></li>
</ul>
<div class="trunk"></div>
</div>
<div class="hbar d-flex align-items-center flex-shrink-0">
<svg width="12" height="12" viewBox="0 0 12 12"><path d="M7 3L4 6l3 3" fill="none" stroke="#444" stroke-width="1.500"/></svg>
<div class="thumb"></div>
<svg class="ms-auto me-2" width="12" height="12" viewBox="0 0 12 12"><path d="M5 3l3 3-3 3" fill="none" stroke="#444" stroke-width="1.500"/></svg>
</div>
</div>
</section>

<section class="scene flex-grow-1" aria-label="가공 모의 화면">
<svg class="w-100 h-100" viewBox="0 0 493 438" preserveAspectRatio="xMinYMin slice">
<defs>
<linearGradient id="band" gradientUnits="userSpaceOnUse" x1="620" y1="40" x2="90" y2="330"><stop stop-color="#2c435a"/><stop offset=".25" stop-color="#46698c"/><stop offset=".6" stop-color="#5a8ab8"/><stop offset="1" stop-color="#6396c8"/></linearGradient>
<linearGradient id="ring" gradientUnits="userSpaceOnUse" x1="560" y1="220" x2="180" y2="880"><stop stop-color="#2c435a"/><stop offset=".2" stop-color="#4a7096"/><stop offset=".45" stop-color="#6396c8"/><stop offset=".75" stop-color="#5585b4"/><stop offset="1" stop-color="#2c435a"/></linearGradient>
<linearGradient id="teal" gradientUnits="userSpaceOnUse" x1="520" y1="350" x2="260" y2="770"><stop stop-color="#006428"/><stop offset=".45" stop-color="#009832"/><stop offset=".7" stop-color="#009030"/><stop offset="1" stop-color="#006424"/></linearGradient>
<linearGradient id="c1" gradientUnits="userSpaceOnUse" x1="590" y1="400" x2="320" y2="800"><stop stop-color="#004c00"/><stop offset=".45" stop-color="#008000"/><stop offset=".75" stop-color="#007400"/><stop offset="1" stop-color="#004000"/></linearGradient>
<linearGradient id="c2" gradientUnits="userSpaceOnUse" x1="650" y1="480" x2="440" y2="815"><stop stop-color="#003c00"/><stop offset=".5" stop-color="#008000"/><stop offset=".75" stop-color="#007000"/><stop offset="1" stop-color="#003c00"/></linearGradient>
<linearGradient id="c3" gradientUnits="userSpaceOnUse" x1="770" y1="585" x2="590" y2="865"><stop stop-color="#003800"/><stop offset=".5" stop-color="#008000"/><stop offset=".75" stop-color="#006c00"/><stop offset="1" stop-color="#003800"/></linearGradient>
<linearGradient id="c4" gradientUnits="userSpaceOnUse" x1="930" y1="740" x2="800" y2="930"><stop stop-color="#002c00"/><stop offset=".4" stop-color="#007400"/><stop offset="1" stop-color="#004400"/></linearGradient>
<linearGradient id="cone" gradientUnits="userSpaceOnUse" x1="970" y1="800" x2="840" y2="950"><stop stop-color="#004000"/><stop offset=".45" stop-color="#008a00"/><stop offset=".7" stop-color="#007c00"/><stop offset="1" stop-color="#003400"/></linearGradient>
<linearGradient id="pink" gradientUnits="userSpaceOnUse" x1="770" y1="630" x2="640" y2="850"><stop stop-color="#9c6080"/><stop offset=".3" stop-color="#fa96c4"/><stop offset=".8" stop-color="#f48cbc"/><stop offset="1" stop-color="#b06484"/></linearGradient>
<clipPath id="thr"><path d="M812 635L905 685C830 690 755 780 741 860Q740 910 760 940L665 880Q635 830 655 770Q690 680 770 636Z"/></clipPath>
</defs>
<g transform="translate(95 -5) scale(.3333)">
<path d="M-290 0H730Q766 140 740 300Q720 430 698 510L503 855Q430 905 370 970Q210 1110 20 1136L-290 1100Z" fill="#507aa2"/>
<path d="M0 15H55L0 75Z" fill="#5d8fc0"/>
<path d="M245 15H540L618 62Q520 15 430 48C250 110 80 350 0 510V245Q110 110 245 15Z" fill="url(#band)"/>
<path d="M560 240C505 190 430 190 345 240C210 330 90 510 90 670Q95 820 203 868C125 800 120 700 145 590C185 450 300 300 385 250Q475 205 560 240Z" fill="url(#ring)"/>
<path d="M0 943Q30 985 72 1006Q25 992 0 966Z" fill="#2c435a"/>
<path d="M500 345C460 330 400 340 345 385C260 455 215 570 218 665Q223 750 275 778L340 800L600 500L575 392Z" fill="url(#teal)"/>
<path d="M520 366C420 370 300 480 270 610Q250 720 285 772Q310 795 370 800L400 820L600 560L642 485Q640 440 615 415L575 392L545 370Z" fill="url(#c1)"/>
<path d="M520 366C420 370 300 480 270 610Q250 720 285 772" fill="none" stroke="#006000" stroke-width="3"/>
<path d="M545 398C450 400 340 530 320 645Q305 750 350 800Q375 822 410 822L452 815L642 485Q640 440 615 415Q585 392 545 398Z" fill="#006a00"/>
<path d="M530 402C440 420 350 530 328 645" fill="none" stroke="#149414" stroke-width="3"/>
<path d="M560 435C460 440 370 560 350 660Q340 740 375 785Q400 808 450 815L550 830L690 508L642 485Q600 440 560 435Z" fill="url(#c2)"/>
<path d="M690 505C590 470 450 640 450 750Q450 825 520 858Q550 872 590 862L748 578Q740 520 690 505Z" fill="url(#c2)"/>
<path d="M690 510C590 510 500 650 480 740Q475 840 530 862Q560 870 590 862L748 578Q735 520 690 510Z" fill="#006a00"/>
<path d="M690 538C600 550 515 660 500 730Q490 810 530 840L640 880L700 880L800 615L748 575Q720 540 690 538Z" fill="url(#c3)"/>
<path d="M650 550C590 580 525 670 504 735" fill="none" stroke="#149414" stroke-width="2"/>
<path d="M775 602C700 605 625 700 610 790Q605 850 640 882Q655 888 670 885L812 635Q800 610 775 602Z" fill="#006600"/>
<path d="M770 632C720 620 640 700 624 780Q620 830 645 852L680 870L760 660Z" fill="url(#pink)"/>
<path d="M812 635L905 685C830 690 755 780 741 860Q740 910 760 940L665 880Q635 830 655 770Q690 680 770 636Z" fill="#004e00"/>
<g clip-path="url(#thr)" fill="none" stroke="#ff00ff" stroke-width="9">
<path id="th" d="M835 625C760 620 665 710 649 810Q648 860 680 910"/>
<use href="#th" x="14" y="8"/><use href="#th" x="29" y="16"/><use href="#th" x="43" y="24"/><use href="#th" x="58" y="32"/><use href="#th" x="72" y="40"/><use href="#th" x="87" y="48"/>
</g>
<path d="M900 686C820 690 755 780 741 860Q740 910 760 940Q790 962 835 943L945 760Q942 700 900 686Z" fill="#006600"/>
<path d="M895 727C830 735 785 800 777 860Q775 905 790 923L850 946L945 752Q920 730 895 727Z" fill="url(#c4)"/>
<path d="M870 737C825 750 790 810 780 850" fill="none" stroke="#188018" stroke-width="3"/>
<path d="M925 750Q965 760 967 810L960 888Q915 935 865 947Q825 945 816 895C815 840 870 755 925 750Z" fill="url(#cone)"/>
<path d="M985 718Q1020 685 1070 677L1076 664L1092 672L1113 718L1110 739L1122 741L1115 745L1005 735L985 722Z" fill="#2828c8"/>
<path d="M984 722L1000 725L1020 730L1122 742V783H1105L1020 770L1005 762L984 766Z" fill="#3030f4"/><path d="M1005 726L1020 730V770L1005 762Z" fill="#2828cc"/>
</g>
</svg>
</section>
</main>

<footer>
<div class="status d-flex align-items-center justify-content-end overflow-hidden">
<button class="flat" style="width:19px">3D</button>
<button class="flat" style="width:47px">그래픽뷰</button>
<button class="flat" style="width:20px">평면</button>
<label for="depth">Z</label>
<select id="depth" class="pick depth"><option>0.0</option></select>
<div class="d-flex align-items-center">
<button class="flat border-0" style="width:28px;background:#0f0">10</button>
<button class="flat border-0 text-black" style="width:11px">▼</button>
</div>
<button class="flat bg-light border-0" style="width:12px">레</button>
</div>
<div class="strip"></div>
</footer>

<section class="sim" role="dialog" aria-label="모의가공">
<div class="sim-head d-flex align-items-center justify-content-between"><span>모의가공</span><button class="border-0 bg-transparent" aria-label="닫기"><svg width="8" height="8" viewBox="0 0 8 8"><path d="M0 0l8 8M8 0L0 8" stroke="#222"/></svg></button></div>
<div class="sim-body">
<div class="five d-flex justify-content-between">
<button class="key text-black" aria-label="처음"><svg viewBox="0 0 16 16"><path d="M2 3h2v10H2zM9 3v10L4 8zM14 3v10L9 8z" fill="#000"/></svg></button>
<button class="key off" aria-label="재생"><svg viewBox="0 0 16 16"><path d="M5 3l6 5-6 5z" fill="#999"/></svg></button>
<button class="key off" aria-label="정지"><svg viewBox="0 0 16 16"><path d="M3 3h10v10H3z" fill="#999"/></svg></button>
<button class="key off" aria-label="한 단계"><svg viewBox="0 0 16 16"><path d="M4 3h1v10H4zM7 3l6 5-6 5z" fill="#999"/></svg></button>
<button class="key off" aria-label="빠르게"><svg viewBox="0 0 16 16"><path d="M2 3l6 5-6 5zM8 3l6 5-6 5z" fill="#999"/></svg></button>
</div>
<div class="trio d-flex justify-content-center">
<button class="key big" aria-label="축"><svg viewBox="0 0 18 18"><circle cx="9" cy="9" r="8" fill="none" stroke="#999"/><path d="M6 6q3-4 6 0v6q-3 4-6 0zM6 9q3-3 6 0" fill="none" stroke="#999" stroke-width="2"/></svg></button>
<button class="key big on" aria-label="공구"><svg viewBox="0 0 16 16"><path d="M4 0h8v16H4z" fill="#999"/></svg></button>
<button class="key big" aria-label="홀더"><svg viewBox="0 0 16 16"><path d="M1 0h14v4l-5 5v7H7V9L1 4z" fill="#999"/></svg></button>
</div>
<fieldset>
<legend>화면표시 조절</legend>
<div class="pair d-flex align-items-center justify-content-between"><label for="f1">이동/스텝:</label><input id="f1" class="fld" value="1000"></div>
<div class="pair d-flex align-items-center justify-content-between"><label for="f2">이동/리프레시:</label><input id="f2" class="fld" value="1"></div>
<div class="pace d-flex align-items-center justify-content-between"><label for="r1">속도</label><span class="scale"><input id="r1" class="rng w-100 d-block" type="range" value="100" disabled></span><span>화질</span></div>
<label class="tick update"><input type="checkbox" checked>각 가공경로 실행후 업데이트</label>
</fieldset>
<fieldset class="mt-1">
<legend>정지 조건</legend>
<div class="stops">
<label class="tick"><input type="checkbox">공구충돌시 정지</label>
<label class="tick"><input type="checkbox">공구교체시 정지</label>
<label class="tick"><input type="checkbox">각 작업진행후&nbsp; 정지</label>
</div>
</fieldset>
<label class="tick detail"><input type="checkbox">좌표,상세</label>
<div class="five d-flex justify-content-between">
<button class="key off" aria-label="재료"><svg viewBox="0 0 16 16"><path d="M2 5h2V3h3v2h2V3h3v2h2v8H2z" fill="#999"/></svg></button>
<button class="key" aria-label="자르기"><svg viewBox="0 0 16 16"><path d="M5 10l8-7M6 10l8-3" stroke="#222" stroke-width="1.500"/><g fill="none" stroke="#222" stroke-width="1.500"><circle cx="4" cy="9" r="1.500"/><circle cx="6" cy="12" r="1.500"/></g></svg></button>
<button class="key" aria-label="통계"><svg viewBox="0 0 16 16"><path d="M2 3v10h12V3M5 8v5M8 5v8M11 7v6" fill="none" stroke="#f01818" stroke-width="1.500"/></svg></button>
<button class="key off" aria-label="측정"><svg viewBox="0 0 16 16"><path d="M2 2l4 4M14 2l-4 4M2 14l5-4M10 10l5 4M5 5v6l5-1z" fill="none" stroke="#888"/><circle cx="8" cy="8" r="3" fill="none" stroke="#888"/></svg></button>
<button class="key" aria-label="저장"><svg viewBox="0 0 16 16"><path d="M3 3h11v11H4l-1-1z" fill="#222"/><path d="M5 4h7v4H5z" fill="#ddd"/><path d="M6 10h5v3H6z" fill="#888"/></svg></button>
</div>
<div class="five d-flex justify-content-between align-items-center mt-2 pt-1">
<button class="key" aria-label="느리게"><svg viewBox="0 0 16 16"><circle cx="8" cy="3" r="1.500" fill="#111"/><path d="M8 4v5M4 8l4-3 4 3M8 9l-3 5H3M8 9l3 5h2" fill="none" stroke="#111" stroke-width="1.300"/></svg></button>
<input class="rng" style="width:56px" type="range" value="100" aria-label="속도 조절">
<button class="key" aria-label="빠르게"><svg viewBox="0 0 16 16"><circle cx="11" cy="2.500" r="1.800" fill="#111"/><path d="M10 4L7 9M3 6l3-2 4 1 3 3M7 9l4 2v4M7 9l-2 3H1M1 3h3M0 9h3" fill="none" stroke="#111" stroke-width="1.600"/></svg></button>
</div>
<dl class="facts">
<dt>작업 #:</dt><dd>5</dd><dt>가공경로:</dt><dd>선반 나사</dd><dt>공구#:</dt><dd>7</dd><dt>공구 라벨:</dt><dd>OD THREAD RIGHT-</dd>
</dl>
<input class="pct d-block mx-auto" value="100%" aria-label="진행률" readonly>
<div class="finish d-flex justify-content-between">
<button class="key wide" aria-label="확인"><svg viewBox="0 0 16 16"><path d="M1 9l3-2 3 3 7-9-6 14H6z" fill="#4cc828" stroke="#20880c"/></svg></button>
<button class="key wide" aria-label="취소"><svg viewBox="0 0 16 16"><path d="M2 4l3-2 3 3 4-3 2 3-3 3 3 3-2 3-4-3-4 3-2-3 3-3z" fill="#f04818" stroke="#b82808"/></svg></button>
<button class="key wide" aria-label="도움말"><svg><use href="#qmark"/></svg></button>
</div>
</div>
</section>
</body>
</html>
